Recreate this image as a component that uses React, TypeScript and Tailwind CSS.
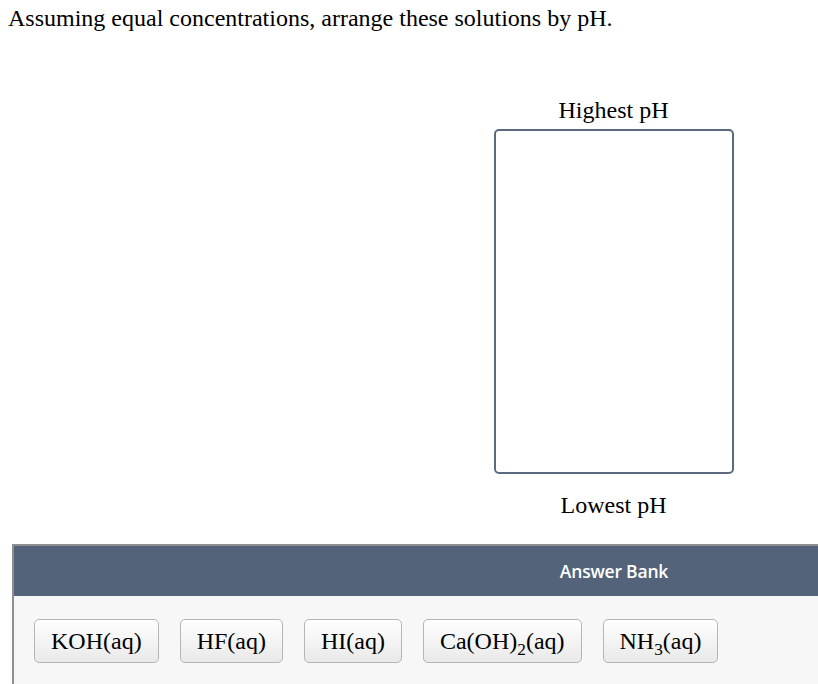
const serif = "font-['Liberation_Serif','Times_New_Roman',serif]";

type Chip = { id: string; label: React.ReactNode };

const Sub = ({ children }: { children: React.ReactNode }) => (
  <sub className="relative top-[0.32em] bottom-auto align-baseline text-[0.72em]">{children}</sub>
);

const chips: Chip[] = [
  { id: "koh", label: "KOH(aq)" },
  { id: "hf", label: "HF(aq)" },
  { id: "hi", label: "HI(aq)" },
  {
    id: "caoh2",
    label: (
      <>
        Ca(OH)<Sub>2</Sub>(aq)
      </>
    ),
  },
  {
    id: "nh3",
    label: (
      <>
        NH<Sub>3</Sub>(aq)
      </>
    ),
  },
];

export default function App() {
  return (
    <div className={`min-h-screen w-full overflow-hidden bg-white text-black ${serif}`}>
      <p className="px-2 pt-[3px] text-[24px] leading-[30px]">
        Assuming equal concentrations, arrange these solutions by pH.
      </p>

      {/* ranking target */}
      <div className="mt-[62px] flex w-[1215px] flex-col items-center pl-[12px]">
        <div className="text-[24px] leading-[30px]">Highest pH</div>
        <div className="mt-[4px] h-[345px] w-[240px] rounded-[5px] border-2 border-[#5b6a7e] bg-white" />
        <div className="mt-[16px] text-[24px] leading-[30px]">Lowest pH</div>
      </div>

      {/* answer bank */}
      <div className="ml-[12px] mt-[24px] w-[1202px] border-l-2 border-t-2 border-[#8f8f8f]">
        <div className="flex h-[50px] items-center justify-center bg-[#536379] font-['Open_Sans',sans-serif] text-[17.5px] font-semibold tracking-[-0.2px] text-white">
          Answer Bank
        </div>
        <div className="flex h-[100px] items-start gap-[21px] bg-[#f7f7f7] px-[20px] pt-[23px]">
          {chips.map((c) => (
            <button
              key={c.id}
              className="h-[44px] rounded-[5px] border border-[#b5b5b5] bg-gradient-to-b from-white to-[#e9e9e9] px-[16px] text-[24px] leading-none text-black"
            >
              {c.label}
            </button>
          ))}
        </div>
      </div>
    </div>
  );
}
